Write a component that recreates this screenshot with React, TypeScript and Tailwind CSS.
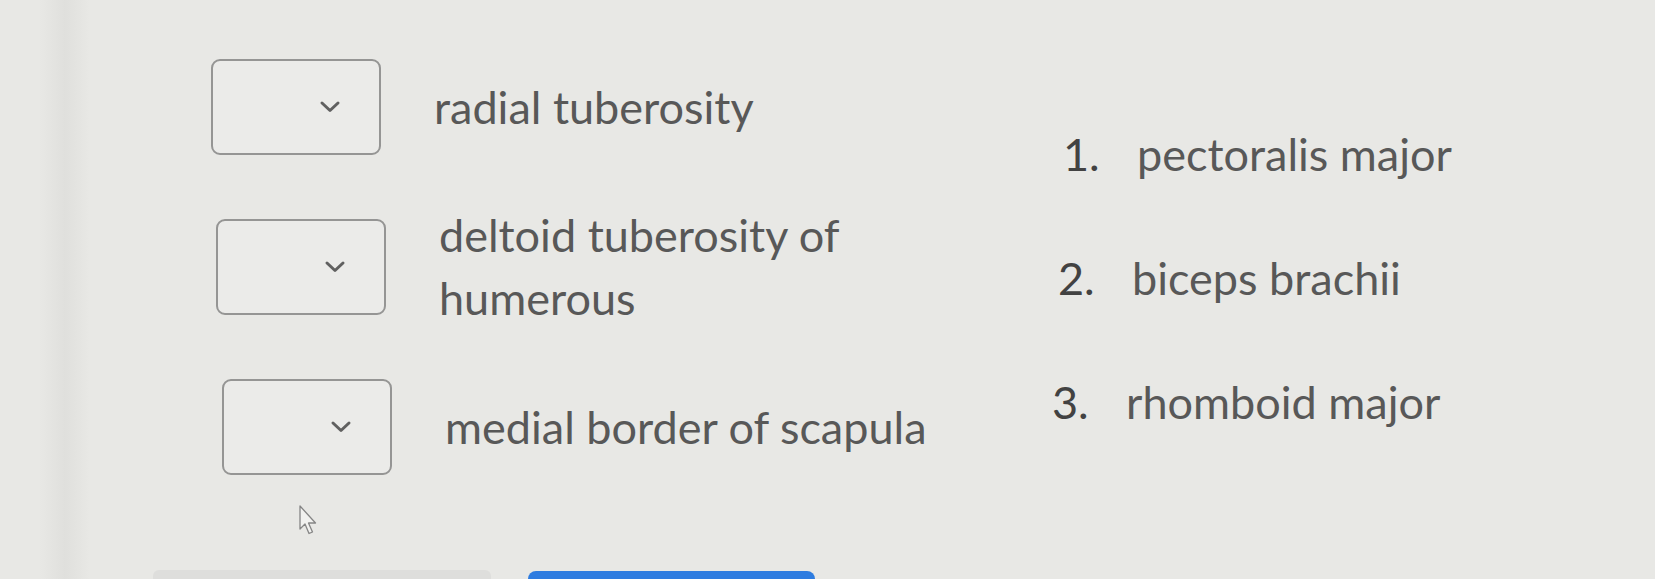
interface MatchRow {
  label: string;
  offset: string;
}

const rows: MatchRow[] = [
  { label: "radial tuberosity", offset: "ml-0" },
  { label: "deltoid tuberosity of humerous", offset: "ml-[5px]" },
  { label: "medial border of scapula", offset: "ml-[11px]" },
];

const choices = [
  { label: "pectoralis major", offset: "ml-[11px]" },
  { label: "biceps brachii", offset: "ml-[6px]" },
  { label: "rhomboid major", offset: "ml-0" },
];

function Chevron() {
  return (
    <svg width="26" height="16" viewBox="0 0 26 16" fill="none">
      <path d="M5 4 L13 11.5 L21 4" stroke="#606060" strokeWidth="3" strokeLinecap="round" strokeLinejoin="round" />
    </svg>
  );
}

function SelectBox() {
  return (
    <div className="flex h-[96px] w-[170px] shrink-0 items-center justify-end rounded-[9px] border-2 border-[#959594] bg-[#ebebe9] pr-[36px]">
      <Chevron />
    </div>
  );
}

function Pointer() {
  return (
    <svg width="20" height="33" viewBox="0 0 20 33" className="absolute left-[298px] top-[504px]">
      <path
        d="M2 2 L2 25 L7 20 L11 29.5 L14.5 28 L10.5 19 L17.5 19 Z"
        fill="#f1f1ef"
        stroke="#858585"
        strokeWidth="1.3"
        strokeLinejoin="round"
      />
    </svg>
  );
}

export default function App() {
  return (
    <div className="relative flex h-[579px] w-full flex-col overflow-hidden bg-[#e8e8e5] font-['Lato','Open_Sans',sans-serif] text-[#585858]">
      {/* soft shadow band down the left edge */}
      <div className="absolute inset-y-0 left-[40px] w-[50px] bg-gradient-to-r from-transparent via-[#dcdcd9] to-transparent opacity-70" />

      <div className="relative flex pt-[58px]">
        <div className="flex w-[935px] flex-col gap-[62px] pl-[211px]">
          {rows.map((row) => (
            <div key={row.label} className={`flex h-[98px] items-center ${row.offset}`}>
              <SelectBox />
              <p className="ml-[53px] w-[520px] shrink-0 text-[45px] leading-[63px]">{row.label}</p>
            </div>
          ))}
        </div>

        <ol className="ml-[117px] flex flex-col gap-[80px] pt-[74px]">
          {choices.map((c, i) => (
            <li key={c.label} className={`flex text-[45px] leading-[44px] ${c.offset}`}>
              <span className="w-[74px] text-[#424242]">{i + 1}.</span>
              <span>{c.label}</span>
            </li>
          ))}
        </ol>
      </div>

      <Pointer />

      <div className="relative mt-auto flex h-[9px] gap-[37px] pl-[153px]">
        <button className="h-[40px] w-[338px] shrink-0 rounded-t-[6px] bg-[#dededc]" />
        <button className="mt-[1px] h-[40px] w-[287px] shrink-0 rounded-t-[8px] bg-[#2e7ce0]" />
      </div>
    </div>
  );
}
